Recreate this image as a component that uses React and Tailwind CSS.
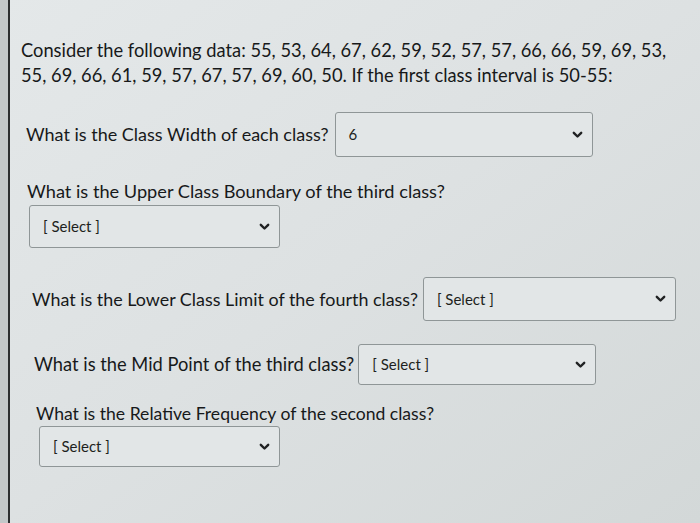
import React from 'react';

const Chevron = () => (
  <svg width="11" height="8" viewBox="0 0 11 8" className="shrink-0">
    <path d="M1.8 1.8 L5.5 5.5 L9.2 1.8" fill="none" stroke="#202223" strokeWidth="2.4" strokeLinecap="round" strokeLinejoin="round" />
  </svg>
);

const Select = ({ value = '[ Select ]', className }) => (
  <div className={`flex items-center justify-between border border-[#8f9697] rounded-[3px] bg-[#e2e6e7] pl-[13px] pr-[9px] ${className}`}>
    <span className="text-[15px] text-[#1d1f20]">{value}</span>
    <Chevron />
  </div>
);

export default function App() {
  return (
    <div
      className="w-[700px] h-[523px] flex overflow-hidden bg-linear-to-br from-[#e4e8e9] via-[#dde1e2] to-[#d3d8d8] text-[#17191a]"
      style={{ fontFamily: 'Lato, "Open Sans", sans-serif' }}
    >
      <div className="w-[10px] shrink-0 bg-[#c3c8c9] border-r-2 border-[#2c2f30]" />
      <div className="flex-1 pl-[11px]">
        <p className="mt-[38px] text-[18.3px] leading-[25px] whitespace-nowrap">
          Consider the following data: 55, 53, 64, 67, 62, 59, 52, 57, 57, 66, 66, 59, 69, 53,
          <br />
          55, 69, 66, 61, 59, 57, 67, 57, 69, 60, 50. If the first class interval is 50-55:
        </p>

        <div className="mt-[24px] ml-[5px] flex items-center h-[45px] text-[18px]">
          <span className="pr-[6px] whitespace-nowrap">What is the Class Width of each class?</span>
          <Select value="6" className="w-[258px] h-[45px]" />
        </div>

        <div className="mt-[22px] ml-[6px] text-[18.2px] leading-[24px] whitespace-nowrap">What is the Upper Class Boundary of the third class?</div>
        <Select className="mt-[2px] ml-[8px] w-[251px] h-[43px]" />

        <div className="mt-[29px] ml-[11px] flex items-center h-[44px] text-[17.9px]">
          <span className="pr-[5px] whitespace-nowrap">What is the Lower Class Limit of the fourth class?</span>
          <Select className="w-[253px] h-[44px]" />
        </div>

        <div className="mt-[23px] ml-[13px] flex items-center h-[41px] text-[18.3px]">
          <span className="pr-[4px] whitespace-nowrap">What is the Mid Point of the third class?</span>
          <Select className="w-[238px] h-[41px]" />
        </div>

        <div className="mt-[18px] ml-[15px] text-[17.6px] leading-[22px] whitespace-nowrap">What is the Relative Frequency of the second class?</div>
        <Select className="mt-[1px] ml-[18px] w-[241px] h-[41px]" />
      </div>
    </div>
  );
}
